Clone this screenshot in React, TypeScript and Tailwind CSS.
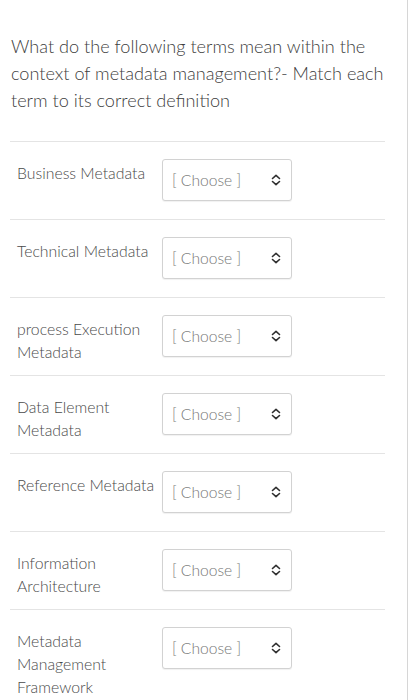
const terms = [
  'Business Metadata',
  'Technical Metadata',
  'process Execution Metadata',
  'Data Element Metadata',
  'Reference Metadata',
  'Information Architecture',
  'Metadata Management Framework',
];

function UpDown() {
  return (
    <svg width="10" height="12" viewBox="0 0 10 12" fill="none" stroke="#2f2f2f" strokeWidth="1.6" strokeLinecap="round" strokeLinejoin="round">
      <path d="M1.5 4.5 L5 1.3 L8.5 4.5" />
      <path d="M1.5 7.5 L5 10.7 L8.5 7.5" />
    </svg>
  );
}

function MatchRow({ term }: { term: string }) {
  return (
    <div className="flex items-start h-[78px] border-t border-[#e4e4e4] pt-[17px]">
      <div className="w-[143px] ml-[7px] pt-[2px] text-[15.8px] leading-[23px] font-light text-[#4a4a4a]">{term}</div>
      <div className="ml-[2px] w-[130px] h-[42px] shrink-0 flex items-center justify-between pl-[9px] pr-[10px] border border-[#d2d2d2] rounded-[3px] bg-white shadow-[0_1px_1px_rgba(0,0,0,0.06)]">
        <span className="pt-[2px] text-[15.6px] font-light text-[#777777]">[ Choose ]</span>
        <UpDown />
      </div>
    </div>
  );
}

export default function App() {
  return (
    <div className="w-[415px] h-[700px] overflow-hidden bg-white flex" style={{ fontFamily: 'Lato, "Open Sans", sans-serif' }}>
      <div className="w-[408px] h-full border-r border-[#d6d6d6] pl-[10px]">
        <div className="w-[375px]">
          <p className="w-[395px] mt-[33px] mb-[27px] pl-[1px] text-[18.1px] leading-[27px] font-light text-[#404040]">
            What do the following terms mean within the context of metadata management?- Match each term to its correct definition
          </p>
          {terms.map((t) => (
            <MatchRow key={t} term={t} />
          ))}
        </div>
      </div>
    </div>
  );
}
